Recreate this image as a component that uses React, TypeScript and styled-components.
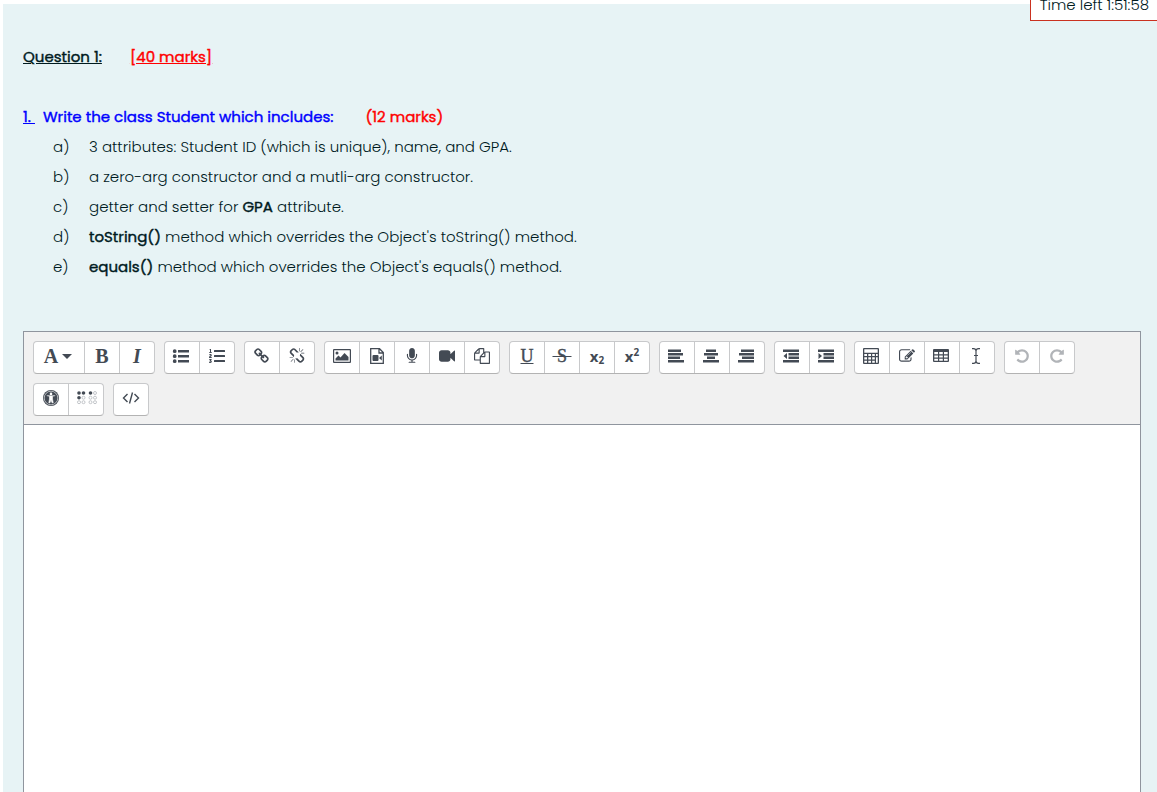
import React from "react";
import styled, { createGlobalStyle, css } from "styled-components";
import { FaListOl } from "react-icons/fa";

const ink = "#434a54";

const GlobalStyle = createGlobalStyle`
  *, *::before, *::after { box-sizing: border-box; }
  body {
    margin: 0;
    background: #fff;
    color: #001a1e;
    font-family: Poppins, Inter, sans-serif;
    font-size: 15px;
    font-weight: 300;
    line-height: 30px;
  }
`;

const Page = styled.main`
  min-height: 100vh;
  display: flex;
  flex-direction: column;
  padding: 4px 0 0 3px;
`;

const Panel = styled.section`
  flex: 1;
  display: flex;
  flex-direction: column;
  padding: 38px 16px 0 20px;
  background: #e7f3f5;
`;

const Timer = styled.div`
  position: fixed;
  top: -12px;
  right: -2px;
  padding: 0 9px;
  border: 1px solid #ca3120;
  background: #fff;
  font-size: 15px;
  line-height: 31px;
  white-space: nowrap;
`;

const QuestionText = styled.div`
  margin-bottom: 49px;
`;

const heavy = css`
  font-weight: 400;
  -webkit-text-stroke: 0.4px;
`;

const Line = styled.h2<{ $gap: number; $after?: number }>`
  display: flex;
  gap: ${(p) => p.$gap}px;
  margin: 0 0 ${(p) => p.$after ?? 0}px;
  font-size: 15px;
  ${heavy}
`;

const Tone = styled.span<{ $color?: string; $underline?: boolean }>`
  color: ${(p) => p.$color ?? "inherit"};
  text-decoration: ${(p) => (p.$underline ? "underline" : "none")};
  white-space: pre;
`;

const Parts = styled.ol`
  list-style: none;
  margin: 0;
  padding: 0 0 0 30px;
`;

const Part = styled.li`
  display: flex;
`;

const Marker = styled.span`
  flex: 0 0 36px;
`;

const Strong = styled.strong`
  ${heavy}
`;

const Editor = styled.div`
  flex: 1;
  display: flex;
  flex-direction: column;
  border: 1px solid #8f959e;
  border-bottom: 0;
  background: #fff;
`;

const Toolbar = styled.div`
  display: flex;
  flex-wrap: wrap;
  gap: 9px;
  padding: 9px 9px 8px;
  border-bottom: 1px solid #8f959e;
  background: #f1f1f1;
`;

const Group = styled.div`
  display: flex;
  border: 1px solid #c8c9cb;
  border-bottom-color: #b3b3b3;
  border-radius: 4px;
  background: #fff;
  overflow: hidden;
`;

const Tool = styled.button<{ $wide?: boolean }>`
  display: flex;
  align-items: center;
  justify-content: center;
  width: ${(p) => (p.$wide ? 51 : 35)}px;
  height: 31px;
  padding: 0 0 3px;
  border: 0;
  background: none;
  color: ${ink};
  & + & { border-left: 1px solid #c8c9cb; }
  &:first-child { width: ${(p) => (p.$wide ? 50 : 34)}px; }
  &:disabled { color: #b1b4b8; }
`;

const Svg = styled.svg`
  display: block;
  fill: currentColor;
`;

const Letter = styled.span<{ $line?: string; $italic?: boolean; $light?: boolean }>`
  font-family: "Liberation Serif", serif;
  font-size: ${(p) => (p.$light ? 18 : 20)}px;
  line-height: 20px;
  font-weight: ${(p) => (p.$light ? 400 : 700)};
  -webkit-text-stroke: ${(p) => (p.$light ? "0.4px" : "0")};
  ${(p) => p.$italic && css`font-style: italic;`}
  ${(p) => p.$line && css`text-decoration: ${p.$line};`}
`;

const Caret = styled.span`
  margin: 0 2px 0 4px;
  border: 5px solid transparent;
  border-top-color: currentColor;
  border-bottom: 0;
`;

const Script = styled.span`
  font-family: "Open Sans", sans-serif;
  font-size: 15px;
  font-weight: 700;
  line-height: 20px;
  sub, sup { font-size: 10px; line-height: 0; }
  sub { vertical-align: -2px; }
`;

const Answer = styled.textarea`
  flex: 1;
  display: block;
  width: 100%;
  padding: 8px 12px;
  border: 0;
  outline: 0;
  resize: none;
  background: #fff;
  font: inherit;
`;

function Awesome({ d, flip }: { d: string; flip?: boolean }) {
  return (
    <Svg width="16" height="16" viewBox="0 0 1792 1792" aria-hidden="true">
      <path d={d} transform={flip ? "matrix(-1 0 0 1 1792 0)" : undefined} />
    </Svg>
  );
}

function Drawn({ d, w = 18, children }: { d?: string; w?: number; children?: React.ReactNode }) {
  return (
    <Svg width={w} height="16" viewBox={`0 0 ${w} 16`} aria-hidden="true">
      {d && <path d={d} fillRule="evenodd" />}
      {children}
    </Svg>
  );
}

const paths = {
  link: "M1456 1216q0-40-28-68l-208-208q-28-28-68-28-42 0-72 32 3 3 19 18.5t21.5 21.5 15 19 13 25.5 3.5 27.5q0 40-28 68t-68 28q-15 0-27.5-3.5t-25.5-13-19-15-21.5-21.5-18.5-19q-33 31-33 73 0 40 28 68l206 207q27 27 68 27 40 0 68-26l147-146q28-28 28-67zm-703-705q0-40-28-68l-206-207q-28-28-68-28-39 0-68 27l-147 146q-28 28-28 67 0 40 28 68l208 208q27 27 68 27 42 0 72-31-3-3-19-18.5t-21.5-21.5-15-19-13-25.5-3.5-27.5q0-40 28-68t68-28q15 0 27.5 3.5t25.5 13 19 15 21.5 21.5 18.5 19q33-31 33-73zm895 705q0 120-85 203l-147 146q-83 83-203 83-121 0-204-85l-206-207q-83-83-83-203 0-123 88-209l-88-88q-86 88-208 88-120 0-204-84l-208-208q-84-84-84-204t85-203l147-146q83-83 203-83 121 0 204 85l206 207q83 83 83 203 0 123-88 209l88 88q86-88 208-88 120 0 204 84l208 208q84 84 84 204z",
  unlink: "M503 1271l-256 256q-10 9-23 9-12 0-23-9-9-10-9-23t9-23l256-256q10-9 23-9t23 9q9 10 9 23t-9 23zm169 41v320q0 14-9 23t-23 9-23-9-9-23v-320q0-14 9-23t23-9 23 9 9 23zm-224-224q0 14-9 23t-23 9h-320q-14 0-23-9t-9-23 9-23 23-9h320q14 0 23 9t9 23zm1264 128q0 120-85 203l-147 146q-83 83-203 83-121 0-204-85l-334-335q-21-21-42-56l239-18 273 274q28 28 68 27.5t68-27.5l147-146q28-28 28-67 0-40-28-68l-274-275 18-239q35 21 56 42l336 336q84 86 84 204zm-617-724l-239 18-273-274q-28-28-68-28-39 0-68 27l-147 146q-28 28-28 67 0 40 28 68l274 274-18 240q-35-21-56-42l-336-336q-84-86-84-204 0-120 85-203l147-146q83-83 203-83 121 0 204 85l334 335q21 21 42 56zm633 84q0 14-9 23t-23 9h-320q-14 0-23-9t-9-23 9-23 23-9h320q14 0 23 9t9 23zm-544-544v320q0 14-9 23t-23 9-23-9-9-23v-320q0-14 9-23t23-9 23 9 9 23zm407 151l-256 256q-11 9-23 9t-23-9q-9-10-9-23t9-23l256-256q10-9 23-9t23 9q9 10 9 23t-9 23z",
  microphone: "M1472 704v128q0 221-147.500 384.500t-364.500 187.500v132h256q26 0 45 19t19 45-19 45-45 19h-640q-26 0-45-19t-19-45 19-45 45-19h256v-132q-217-24-364.500-187.500t-147.500-384.500v-128q0-26 19-45t45-19 45 19 19 45v128q0 185 131.500 316.500t316.500 131.500 316.500-131.500 131.500-316.500v-128q0-26 19-45t45-19 45 19 19 45zm-256-384v512q0 132-94 226t-226 94-226-94-94-226v-512q0-132 94-226t226-94 226 94 94 226z",
  video: "M1792 352v1088q0 42-39 59-13 5-25 5-27 0-45-19l-403-403v166q0 119-84.500 203.500t-203.500 84.500h-704q-119 0-203.500-84.500t-84.500-203.500v-704q0-119 84.500-203.500t203.500-84.500h704q119 0 203.500 84.500t84.500 203.500v165l403-402q18-19 45-19 12 0 25 5 39 17 39 59z",
  files: "M1696 384q40 0 68 28t28 68v1216q0 40-28 68t-68 28h-960q-40 0-68-28t-28-68v-288h-544q-40 0-68-28t-28-68v-672q0-40 20-88t48-76l408-408q28-28 76-48t88-20h416q40 0 68 28t28 68v328q68-40 128-40h416zm-544 213l-299 299h299v-299zm-640-384l-299 299h299v-299zm196 647l316-316v-416h-384v416q0 40-28 68t-68 28h-416v640h512v-256q0-40 20-88t48-76zm956 804v-1152h-384v416q0 40-28 68t-68 28h-416v640h896z",
  edit: "M888 1184l116-116-152-152-116 116v56h96v96h56zm440-720q-16-16-33 1l-350 350q-17 17-1 33t33-1l350-350q17-17 1-33zm80 594v190q0 119-84.500 203.500t-203.500 84.500h-832q-119 0-203.500-84.500t-84.500-203.500v-832q0-119 84.500-203.500t203.500-84.500h832q63 0 117 25 15 7 18 23 3 17-9 29l-49 49q-14 14-32 8-23-6-45-6h-832q-66 0-113 47t-47 113v832q0 66 47 113t113 47h832q66 0 113-47t47-113v-126q0-13 9-22l64-64q15-15 35-7t20 29zm-96-738l288 288-672 672h-288v-288zm444 132l-92 92-288-288 92-92q28-28 68-28t68 28l152 152q28 28 28 68t-28 68z",
  undo: "M1664 896q0 156-61 298t-164 245-245 164-298 61q-172 0-327-72.500t-264-204.500q-7-10-6.500-22.500t8.500-20.500l137-138q10-9 25-9 16 2 23 12 73 95 179 147t225 52q104 0 198.500-40.500t163.500-109.500 109.500-163.500 40.500-198.500-40.500-198.500-109.500-163.500-163.500-109.500-198.500-40.500q-98 0-188 35.500t-160 101.500l137 138q31 30 14 69-17 40-59 40h-448q-26 0-45-19t-19-45v-448q0-42 40-59 39-17 69 14l130 129q107-101 244.500-156.500t284.500-55.500q156 0 298 61t245 164 164 245 61 298z",
  bullets: "M6 2h11v2.400H6zM6 7h11v2.400H6zM6 12h11v2.400H6zM.8 3.200a1.900 1.900 0 1 0 3.800 0a1.900 1.900 0 1 0-3.800 0zM.8 8.200a1.900 1.900 0 1 0 3.800 0a1.900 1.900 0 1 0-3.800 0zM.8 13.200a1.900 1.900 0 1 0 3.800 0a1.900 1.900 0 1 0-3.800 0z",
  left: "M1 1.600h13v2.400H1zM1 5h15v2.400H1zM1 8.600h12v2.400H1zM1 12h16v2.400H1z",
  center: "M4 1.600h10v2.400H4zM2 5h14v2.400H2zM5 8.600h8v2.400H5zM1 12h16v2.400H1z",
  right: "M4 1.600h13v2.400H4zM2 5h15v2.400H2zM5 8.600h12v2.400H5zM1 12h16v2.400H1z",
  outdent: "M1 1.600h16v2.400H1zM6.500 5H17v2.400H6.500zM6.500 8.600H17V11H6.500zM1 12h16v2.400H1zM5 5v6L1.500 8z",
  indent: "M1 1.600h16v2.400H1zM6.500 5H17v2.400H6.500zM6.500 8.600H17V11H6.500zM1 12h16v2.400H1zM1.500 5v6L5 8z",
  image: "M1 1h16q1 0 1 1v12q0 1-1 1H1q-1 0-1-1V2q0-1 1-1zM1.200 2.200v11.600h15.600V2.200zM2.500 12.500v-2l3-3 2 2 4-4.500 4 4v3.500zM2.500 5a1.500 1.500 0 1 0 3 0a1.500 1.500 0 1 0-3 0z",
  calculator: "M1 0h14q1 0 1 1v14q0 1-1 1H1q-1 0-1-1V1q0-1 1-1zM1.300 1.300v3.400h13.400V1.300zM1.300 6v2H4V6zM5.300 6v2H8V6zM9.200 6v2h2.600V6zM13 6v2h1.700V6zM1.300 9.300v2.200H4V9.300zM5.300 9.300v2.200H8V9.300zM9.200 9.300v2.200h2.600V9.300zM1.300 12.700v2H4v-2zM5.300 12.700v2H8v-2zM9.200 12.700v2h2.600v-2zM13 9.300v5.400h1.700V9.300z",
  table: "M1 1h14q1 0 1 1v11q0 1-1 1H1q-1 0-1-1V2q0-1 1-1zM1.300 4v2.200H5V4zM6.200 4v2.200h3.600V4zM11 4v2.200h3.700V4zM1.300 7.400v2.200H5V7.400zM6.200 7.400v2.200h3.600V7.400zM11 7.400v2.200h3.700V7.400zM1.300 10.800v2H5v-2zM6.200 10.800v2h3.600v-2zM11 10.800v2h3.700v-2z",
};

function Braille() {
  const columns = [5, 9.5, 16.5, 21];
  const rows = [3, 7.7, 12.2];
  const filled = ["0,0", "1,0", "0,1", "2,0"];
  return (
    <Drawn w={24}>
      {rows.flatMap((cy, r) =>
        columns.map((cx, c) =>
          filled.includes(`${c},${r}`) ? (
            <circle key={`${c},${r}`} cx={cx} cy={cy} r="1.8" />
          ) : (
            <circle key={`${c},${r}`} cx={cx} cy={cy} r="1.5" fill="none" stroke="#b4b7bc" strokeWidth="0.8" />
          )
        )
      )}
    </Drawn>
  );
}

type ToolDef = { label: string; icon: React.ReactNode; wide?: boolean; disabled?: boolean };

const groups: ToolDef[][] = [
  [
    { label: "Paragraph styles", wide: true, icon: <><Letter>A</Letter><Caret /></> },
    { label: "Bold", icon: <Letter>B</Letter> },
    { label: "Italic", icon: <Letter $italic>I</Letter> },
  ],
  [
    { label: "Unordered list", icon: <Drawn w={20} d={paths.bullets} /> },
    { label: "Ordered list", icon: <FaListOl size={16} /> },
  ],
  [
    { label: "Link", icon: <Awesome d={paths.link} /> },
    { label: "Unlink", icon: <Awesome d={paths.unlink} /> },
  ],
  [
    { label: "Insert image", icon: <Drawn d={paths.image} /> },
    {
      label: "Insert media",
      icon: (
        <Drawn w={14}>
          <path d="M.700.700H9.500L13.300 4.500V15.300H.7zM9 .7V5h4.300" fill="none" stroke="currentColor" strokeWidth="1.3" />
          <path d="M3.500 7h4q1 0 1 1v4q0 1-1 1h-4q-1 0-1-1V8q0-1 1-1zM9 10l2.800-2.600v5.200z" />
        </Drawn>
      ),
    },
    { label: "Record audio", icon: <Awesome d={paths.microphone} /> },
    { label: "Record video", icon: <Awesome d={paths.video} /> },
    { label: "Manage files", icon: <Awesome d={paths.files} /> },
  ],
  [
    { label: "Underline", icon: <Letter $light $line="underline">U</Letter> },
    {
      label: "Strike through",
      icon: <Letter $light $line="line-through">&nbsp;S&nbsp;</Letter>,
    },
    { label: "Subscript", icon: <Script>x<sub>2</sub></Script> },
    { label: "Superscript", icon: <Script>x<sup>2</sup></Script> },
  ],
  [
    { label: "Left align", icon: <Drawn w={20} d={paths.left} /> },
    { label: "Centre", icon: <Drawn w={20} d={paths.center} /> },
    { label: "Right align", icon: <Drawn w={20} d={paths.right} /> },
  ],
  [
    { label: "Outdent", icon: <Drawn w={20} d={paths.outdent} /> },
    { label: "Indent", icon: <Drawn w={20} d={paths.indent} /> },
  ],
  [
    { label: "Equation editor", icon: <Drawn d={paths.calculator} /> },
    { label: "Insert character", icon: <Awesome d={paths.edit} /> },
    { label: "Table", icon: <Drawn d={paths.table} /> },
    {
      label: "Clear formatting",
      icon: (
        <Drawn w={12}>
          <path d="M1 .6h1.500Q5 .6 5 3v10q0 2.400-2.500 2.400H1M9 .6H7.500Q5 .6 5 3M9 15.400H7.500Q5 15.400 5 13M3 7.500h4" fill="none" stroke="currentColor" strokeWidth="1.200" />
        </Drawn>
      ),
    },
  ],
  [
    { label: "Undo", disabled: true, icon: <Awesome d={paths.undo} /> },
    { label: "Redo", disabled: true, icon: <Awesome d={paths.undo} flip /> },
  ],
  [
    {
      label: "Accessibility checker",
      icon: (
        <Drawn w={16}>
          <circle cx="8" cy="8" r="8" />
          <circle cx="8" cy="8" r="6.8" fill="none" stroke="#fff" strokeWidth="0.6" />
          <circle cx="8" cy="3.9" r="1.3" fill="#fff" />
          <path d="M3.800 5.600L6.500 6.300V9L5.800 12.800h1.200L8 9.800 9 12.800h1.200L9.500 9V6.300l2.700-.7" fill="#fff" stroke="#fff" strokeWidth="0.6" />
        </Drawn>
      ),
    },
    { label: "Screenreader helper", icon: <Braille /> },
  ],
  [
    {
      label: "HTML",
      icon: (
        <Drawn>
          <path d="M5.500 4L1.500 8l4 4M12.500 4l4 4-4 4M10.500 2.500L7.500 13.500" fill="none" stroke="currentColor" strokeWidth="1.400" />
        </Drawn>
      ),
    },
  ],
];

const parts: React.ReactNode[] = [
  "3 attributes: Student ID (which is unique), name, and GPA.",
  "a zero-arg constructor and a mutli-arg constructor.",
  <>getter and setter for <Strong>GPA</Strong> attribute.</>,
  <><Strong>toString()</Strong> method which overrides the Object's toString() method.</>,
  <><Strong>equals()</Strong> method which overrides the Object's equals() method.</>,
];

export default function App() {
  return (
    <Page>
      <GlobalStyle />
      <Timer role="timer">Time left 1:51:58</Timer>
      <Panel>
        <QuestionText>
          <Line $gap={28} $after={30}>
            <Tone $underline>Question 1:</Tone>
            <Tone $color="#ff0000" $underline>[40 marks]</Tone>
          </Line>
          <Line $gap={32}>
            <Tone $color="#0000ff">
              <Tone $underline>{"1. "}</Tone>
              {"  Write the class Student which includes:"}
            </Tone>
            <Tone $color="#ff0000">(12 marks)</Tone>
          </Line>
          <Parts>
            {parts.map((part, i) => (
              <Part key={i}>
                <Marker>{"abcde"[i]})</Marker>
                <span>{part}</span>
              </Part>
            ))}
          </Parts>
        </QuestionText>
        <Editor>
          <Toolbar role="toolbar" aria-label="Editor">
            {groups.map((tools, i) => (
              <Group key={i}>
                {tools.map((t) => (
                  <Tool key={t.label} type="button" aria-label={t.label} $wide={t.wide} disabled={t.disabled}>
                    {t.icon}
                  </Tool>
                ))}
              </Group>
            ))}
          </Toolbar>
          <Answer aria-label="Answer text" />
        </Editor>
      </Panel>
    </Page>
  );
}
